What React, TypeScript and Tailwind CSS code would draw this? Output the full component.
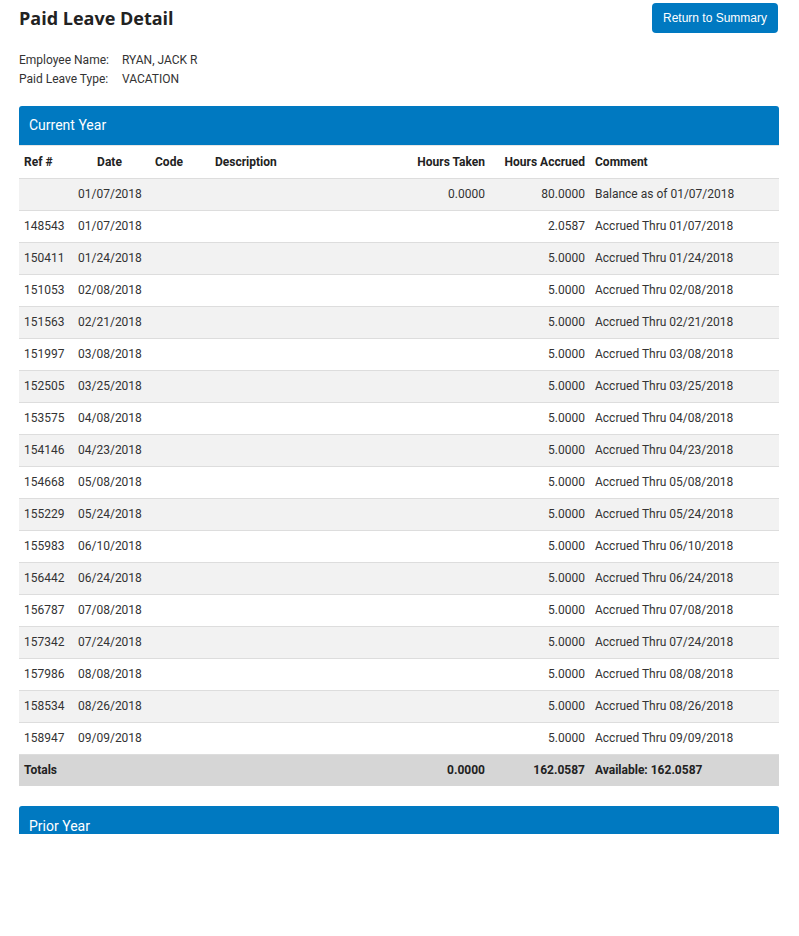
import React from "react";

const rows: [string, string, string, string, string][] = [
  ["", "01/07/2018", "0.0000", "80.0000", "Balance as of 01/07/2018"],
  ["148543", "01/07/2018", "", "2.0587", "Accrued Thru 01/07/2018"],
  ["150411", "01/24/2018", "", "5.0000", "Accrued Thru 01/24/2018"],
  ["151053", "02/08/2018", "", "5.0000", "Accrued Thru 02/08/2018"],
  ["151563", "02/21/2018", "", "5.0000", "Accrued Thru 02/21/2018"],
  ["151997", "03/08/2018", "", "5.0000", "Accrued Thru 03/08/2018"],
  ["152505", "03/25/2018", "", "5.0000", "Accrued Thru 03/25/2018"],
  ["153575", "04/08/2018", "", "5.0000", "Accrued Thru 04/08/2018"],
  ["154146", "04/23/2018", "", "5.0000", "Accrued Thru 04/23/2018"],
  ["154668", "05/08/2018", "", "5.0000", "Accrued Thru 05/08/2018"],
  ["155229", "05/24/2018", "", "5.0000", "Accrued Thru 05/24/2018"],
  ["155983", "06/10/2018", "", "5.0000", "Accrued Thru 06/10/2018"],
  ["156442", "06/24/2018", "", "5.0000", "Accrued Thru 06/24/2018"],
  ["156787", "07/08/2018", "", "5.0000", "Accrued Thru 07/08/2018"],
  ["157342", "07/24/2018", "", "5.0000", "Accrued Thru 07/24/2018"],
  ["157986", "08/08/2018", "", "5.0000", "Accrued Thru 08/08/2018"],
  ["158534", "08/26/2018", "", "5.0000", "Accrued Thru 08/26/2018"],
  ["158947", "09/09/2018", "", "5.0000", "Accrued Thru 09/09/2018"],
];

export default function App() {
  return (
    <div className="w-[799px] h-[936px] bg-white text-[#333] font-['Roboto',sans-serif]">
      <div className="h-[834px] overflow-hidden px-[19px] pr-[20px]">
        <div className="flex justify-between items-start">
          <h1 className="mt-[6px] text-[18px] leading-[24px] font-bold text-[#222] font-['Open_Sans',sans-serif]">
            Paid Leave Detail
          </h1>
          <button className="mt-[3px] mr-[1px] h-[30px] w-[126px] rounded-[4px] bg-[#0079c1] text-white text-[12px] font-['Liberation_Sans',Arial,sans-serif]">
            Return to Summary
          </button>
        </div>
        <div className="mt-[18px] grid grid-cols-[103px_1fr] text-[12px] leading-[19px]">
          <span>Employee Name:</span>
          <span>RYAN, JACK R</span>
          <span>Paid Leave Type:</span>
          <span>VACATION</span>
        </div>

        <div className="mt-[17px]">
          <div className="h-[40px] bg-[#0079c1] rounded-t-[3px] flex items-center px-[10px] text-white text-[14px] border-b border-[#e6e6e6]">
            Current Year
          </div>
          <table className="w-[760px] table-fixed border-collapse text-[12px]">
            <colgroup>
              <col className="w-[54px]" />
              <col className="w-[77px]" />
              <col className="w-[60px]" />
              <col className="w-[180px]" />
              <col className="w-[100px]" />
              <col className="w-[100px]" />
              <col className="w-[189px]" />
            </colgroup>
            <thead>
              <tr className="h-[32px] border-b border-[#ddd] font-bold text-[#222]">
                <th className="px-[5px] text-left">Ref #</th>
                <th className="pl-[5px] pr-[9px] text-center">Date</th>
                <th className="px-[5px] text-left">Code</th>
                <th className="px-[5px] text-left">Description</th>
                <th className="px-[5px] text-right">Hours Taken</th>
                <th className="px-[5px] text-right">Hours Accrued</th>
                <th className="px-[5px] text-left">Comment</th>
              </tr>
            </thead>
            <tbody>
              {rows.map((r, i) => (
                <tr
                  key={i}
                  className={
                    i % 2 === 0
                      ? "h-[32px] bg-[#f2f2f2] border-b border-[#ddd]"
                      : "h-[32px] bg-white border-b border-[#ddd]"
                  }
                >
                  <td className="px-[5px]">{r[0]}</td>
                  <td className="px-[5px]">{r[1]}</td>
                  <td className="px-[5px]"></td>
                  <td className="px-[5px]"></td>
                  <td className="px-[5px] text-right">{r[2]}</td>
                  <td className="px-[5px] text-right">{r[3]}</td>
                  <td className="px-[5px]">{r[4]}</td>
                </tr>
              ))}
              <tr className="h-[32px] bg-[#d6d6d6] font-bold text-[#222]">
                <td className="px-[5px]">Totals</td>
                <td className="px-[5px]"></td>
                <td className="px-[5px]"></td>
                <td className="px-[5px]"></td>
                <td className="px-[5px] text-right">0.0000</td>
                <td className="px-[5px] text-right">162.0587</td>
                <td className="px-[5px]">Available: 162.0587</td>
              </tr>
            </tbody>
          </table>
        </div>

        <div className="mt-[20px]">
          <div className="h-[40px] bg-[#0079c1] rounded-t-[3px] flex items-center px-[10px] text-white text-[14px]">
            Prior Year
          </div>
        </div>
      </div>
    </div>
  );
}
